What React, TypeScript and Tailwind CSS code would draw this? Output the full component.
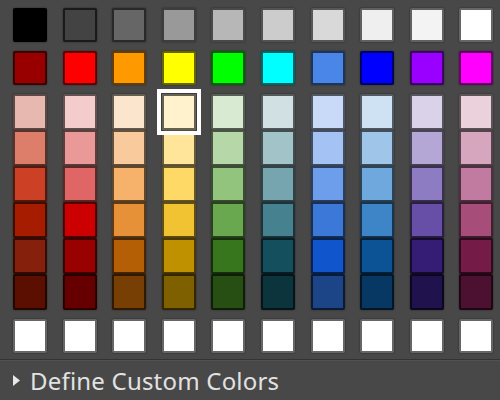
const greys = ["#000000", "#434343", "#666666", "#999999", "#b7b7b7", "#cccccc", "#d9d9d9", "#efefef", "#f3f3f3", "#ffffff"];
const brights = ["#980000", "#ff0000", "#ff9900", "#ffff00", "#00ff00", "#00ffff", "#4a86e8", "#0000ff", "#9900ff", "#ff00ff"];

// one array per column, lightest to darkest
const shades = [
  ["#e6b8af", "#dd7e6b", "#cc4125", "#a61c00", "#85200c", "#5b0f00"],
  ["#f4cccc", "#ea9999", "#e06666", "#cc0000", "#990000", "#660000"],
  ["#fce5cd", "#f9cb9c", "#f6b26b", "#e69138", "#b45f06", "#783f04"],
  ["#fff2cc", "#ffe599", "#ffd966", "#f1c232", "#bf9000", "#7f6000"],
  ["#d9ead3", "#b6d7a8", "#93c47d", "#6aa84f", "#38761d", "#274e13"],
  ["#d0e0e3", "#a2c4c9", "#76a5af", "#45818e", "#134f5c", "#0c343d"],
  ["#c9daf8", "#a4c2f4", "#6d9eeb", "#3c78d8", "#1155cc", "#1c4587"],
  ["#cfe2f3", "#9fc5e8", "#6fa8dc", "#3d85c6", "#0b5394", "#073763"],
  ["#d9d2e9", "#b4a7d6", "#8e7cc3", "#674ea7", "#351c75", "#20124d"],
  ["#ead1dc", "#d5a6bd", "#c27ba0", "#a64d79", "#741b47", "#4c1130"],
];

function Swatch({ color, className = "" }: { color: string; className?: string }) {
  return (
    <div
      className={`w-[34px] border-2 border-black/60 shadow-[0_0_2px_rgba(0,0,0,0.5)] ${className}`}
      style={{ backgroundColor: color }}
    />
  );
}

export default function App() {
  return (
    <div
      className="w-[500px] h-[400px] bg-[#484848] flex flex-col overflow-hidden"
      style={{ fontFamily: '"Noto Sans", "Open Sans", sans-serif' }}
    >
      <div className="pl-[13px] pt-[8px] flex flex-col">
        <div className="flex gap-[15.6px]">
          {greys.map((c) => (
            <Swatch key={c} color={c} className="h-[34px] rounded-[2px]" />
          ))}
        </div>
        <div className="flex gap-[15.6px] mt-[9px]">
          {brights.map((c) => (
            <Swatch key={c} color={c} className="h-[34px] rounded-[2px]" />
          ))}
        </div>
        <div className="flex gap-[15.6px] mt-[9px]">
          {shades.map((col, i) => (
            <div key={i} className="flex flex-col">
              {col.map((c, j) => (
                <Swatch
                  key={c}
                  color={c}
                  className={`h-[36px] ${
                    i === 3 && j === 0
                      ? "relative z-10 outline-[4px] outline outline-white outline-offset-[1px]"
                      : "rounded-[2px]"
                  }`}
                />
              ))}
            </div>
          ))}
        </div>
        <div className="flex gap-[15.6px] mt-[9px]">
          {greys.map((c) => (
            <Swatch key={c} color="#ffffff" className="h-[34px] rounded-[2px]" />
          ))}
        </div>
      </div>

      <div className="mt-[6px] h-[2px] bg-[#333333] border-b border-[#525252]" />

      <div className="flex items-center gap-[10px] pl-[13px] h-[39px]">
        <svg width="7" height="11" viewBox="0 0 7 11">
          <path d="M0 0 L7 5.5 L0 11 Z" fill="#e8e8e8" />
        </svg>
        <span className="text-[24px] leading-none tracking-[0.2px] text-[#e2e2e2]">Define Custom Colors</span>
      </div>
    </div>
  );
}
